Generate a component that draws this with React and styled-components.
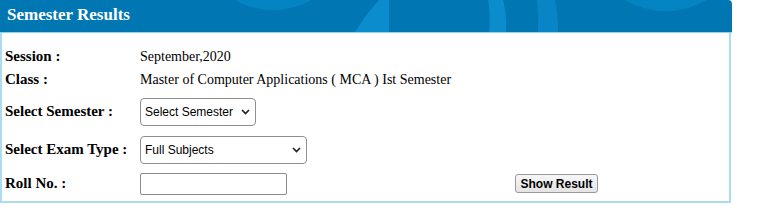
import React from 'react';
import styled, { createGlobalStyle } from 'styled-components';

const GlobalStyle = createGlobalStyle`
    body {
        margin: 0;
        background: #ffffff;
        font-family: "Liberation Serif", "Times New Roman", serif;
    }
`;

const HeaderArt = () => (
    <Art width="732" height="32" viewBox="0 0 732 32">
        <circle cx="273" cy="-69" r="79" fill="#0584c4" />
        <path d="M355 32 Q366 14 379 0 L389 0 L389 32 Z" fill="#0a8ccd" />
        <path d="M488 0 Q491 16 489 32 L506 32 Q507 14 503 0 Z" fill="#0a8ccd" />
        <path d="M537 0 Q539 16 538 32 L558 32 Q558 14 555 0 Z" fill="#0985c6" />
        <circle cx="666" cy="-69" r="80" fill="#0584c4" />
    </Art>
);

const Chevron = () => (
    <ChevronIcon width="9" height="6" viewBox="0 0 9 6">
        <path d="M1 1l3.5 3.5L8 1" fill="none" stroke="#222" strokeWidth="1.7" />
    </ChevronIcon>
);

export default function App() {
    return (
        <>
            <GlobalStyle />
            <Wrapper>
                <Header>
                    <HeaderArt />
                    <Title>Semester Results</Title>
                </Header>
                <Panel>
                    <Row $h={23}>
                        <Label>Session :</Label>
                        <Value>September,2020</Value>
                    </Row>
                    <Row $h={23}>
                        <Label>Class :</Label>
                        <Value>Master of Computer Applications ( MCA ) Ist Semester</Value>
                    </Row>
                    <Row $h={41}>
                        <Label>Select Semester :</Label>
                        <SelectWrap $width={116}>
                            <Select defaultValue="">
                                <option value="">Select Semester</option>
                            </Select>
                            <Chevron />
                        </SelectWrap>
                    </Row>
                    <Row $h={35}>
                        <Label>Select Exam Type :</Label>
                        <SelectWrap $width={167}>
                            <Select defaultValue="full">
                                <option value="full">Full Subjects</option>
                            </Select>
                            <Chevron />
                        </SelectWrap>
                    </Row>
                    <Row $h={33}>
                        <Label>Roll No. :</Label>
                        <Input type="text" />
                        <Button type="button">Show Result</Button>
                    </Row>
                </Panel>
            </Wrapper>
        </>
    );
}

const Wrapper = styled.div`
    width: 732px;
`;

const Header = styled.div`
    position: relative;
    height: 32px;
    overflow: hidden;
    border-radius: 0 4px 0 0;
    background: #0077b3;
    border-bottom: 1px solid #8ed2f2;
`;

const Art = styled.svg`
    position: absolute;
    left: 0;
    top: 0;
`;

const Title = styled.h1`
    position: relative;
    margin: 0;
    padding: 5px 7px;
    color: #ffffff;
    font-size: 17px;
    font-weight: 700;
    line-height: 20px;
    white-space: nowrap;
`;

const Panel = styled.div`
    width: 731px;
    box-sizing: border-box;
    border: 2px solid #aadcf3;
    border-top: none;
    padding: 12px 3px 1px;
    display: flex;
    flex-direction: column;
`;

const Row = styled.div`
    display: grid;
    grid-template-columns: 135px 375px auto;
    align-items: center;
    height: ${props => props.$h}px;
`;

const Label = styled.span`
    font-size: 15px;
    font-weight: 700;
    color: #000000;
    white-space: nowrap;
`;

const Value = styled.span`
    grid-column: 2 / 4;
    font-size: 14px;
    color: #000000;
    white-space: nowrap;
`;

const SelectWrap = styled.div`
    position: relative;
    width: ${props => props.$width}px;
    height: 28px;
`;

const Select = styled.select`
    appearance: none;
    width: 100%;
    height: 100%;
    box-sizing: border-box;
    padding: 0 20px 0 4px;
    border: 1px solid #8f8f8f;
    border-radius: 4px;
    background: #ffffff;
    font-family: "Liberation Sans", Arial, sans-serif;
    font-size: 12px;
    color: #000000;
`;

const ChevronIcon = styled.svg`
    position: absolute;
    right: 6px;
    top: 11px;
    pointer-events: none;
`;

const Input = styled.input`
    width: 147px;
    height: 22px;
    box-sizing: border-box;
    border: 1px solid #8a8a8a;
    border-radius: 2px;
`;

const Button = styled.button`
    justify-self: start;
    height: 19px;
    width: 83px;
    padding: 0;
    border: 1px solid #9a9a9a;
    border-radius: 3px;
    background: linear-gradient(#f7f7f7, #e4e4e4);
    font-family: "Liberation Sans", Arial, sans-serif;
    font-size: 12px;
    font-weight: 700;
    color: #000000;
`;
